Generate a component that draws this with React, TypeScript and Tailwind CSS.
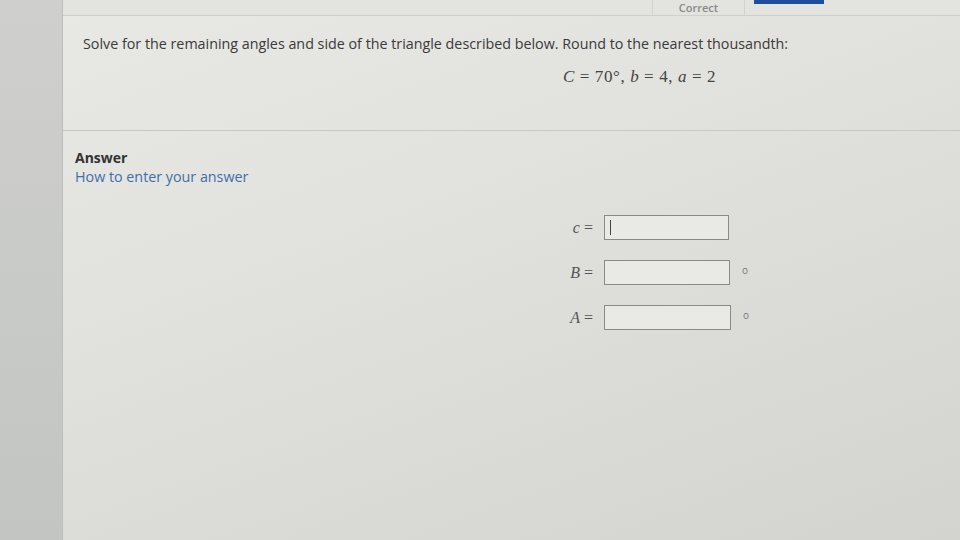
import React from "react";

function Row({ label, deg, w, caret }: { label: React.ReactNode; deg?: boolean; w: string; caret?: boolean }) {
  return (
    <div className="flex items-center h-[25px]">
      <div className="w-[50px] text-right pr-[11px] text-[16px] text-[#555] font-['Liberation_Serif',serif]">{label}</div>
      <div className={`h-[25px] border border-[#8a8a8a] bg-[#e9e9e6] flex items-center pl-[5px] ${w}`}>
        {caret ? <div className="w-[1px] h-[15px] bg-[#444]"></div> : null}
      </div>
      <div className="w-[30px] text-center text-[10px] text-[#777] -mt-[4px]">{deg ? "o" : ""}</div>
    </div>
  );
}

export default function App() {
  return (
    <div className="w-[960px] h-[540px] overflow-hidden flex bg-[#cbccc9] font-['Open_Sans',sans-serif]">
      <div className="w-[62px] shrink-0 bg-[linear-gradient(180deg,#cfd0cd,#c3c5c2)]"></div>
      <div className="flex-1 flex flex-col border-l border-[#bdbdba] bg-[linear-gradient(160deg,#e8e8e5_0%,#e1e1de_40%,#d3d3d0_100%)]">
        <div className="h-[16px] flex border-b border-[#cfcfcc] bg-[#e3e3e0]">
          <div className="w-[589px]"></div>
          <div className="w-[93px] border-x border-[#d2d2cf] flex justify-center items-start pt-[2px]">
            <span className="text-[11px] font-semibold text-[#8a8a88] leading-none">Correct</span>
          </div>
          <div className="w-[9px]"></div>
          <div className="w-[70px] h-[4px] bg-[#1e4f9e]"></div>
        </div>
        <div className="h-[115px] border-b border-[#c8c8c5] pl-[20px] pt-[18px]">
          <div className="text-[14.3px] text-[#3a3a3a] leading-[20px] whitespace-nowrap">
            Solve for the remaining angles and side of the triangle described below. Round to the nearest thousandth:
          </div>
          <div className="pl-[480px] mt-[10px] text-[17px] tracking-[0.6px] text-[#444] font-['Liberation_Serif',serif] whitespace-nowrap">
            <i>C</i> = 70°, <i>b</i> = 4, <i>a</i> = 2
          </div>
        </div>
        <div className="pl-[12px] pt-[17px]">
          <div className="text-[14px] font-bold text-[#333] leading-[19px]">Answer</div>
          <div className="text-[14.3px] text-[#3f6fa8] leading-[20px]">How to enter your answer</div>
        </div>
        <div className="pl-[491px] pt-[28px] flex flex-col gap-[20px]">
          <Row label={<><i>c</i> =</>} w="w-[125px]" caret />
          <Row label={<><i>B</i> =</>} deg w="w-[126px]" />
          <Row label={<><i>A</i> =</>} deg w="w-[127px]" />
        </div>
      </div>
    </div>
  );
}
